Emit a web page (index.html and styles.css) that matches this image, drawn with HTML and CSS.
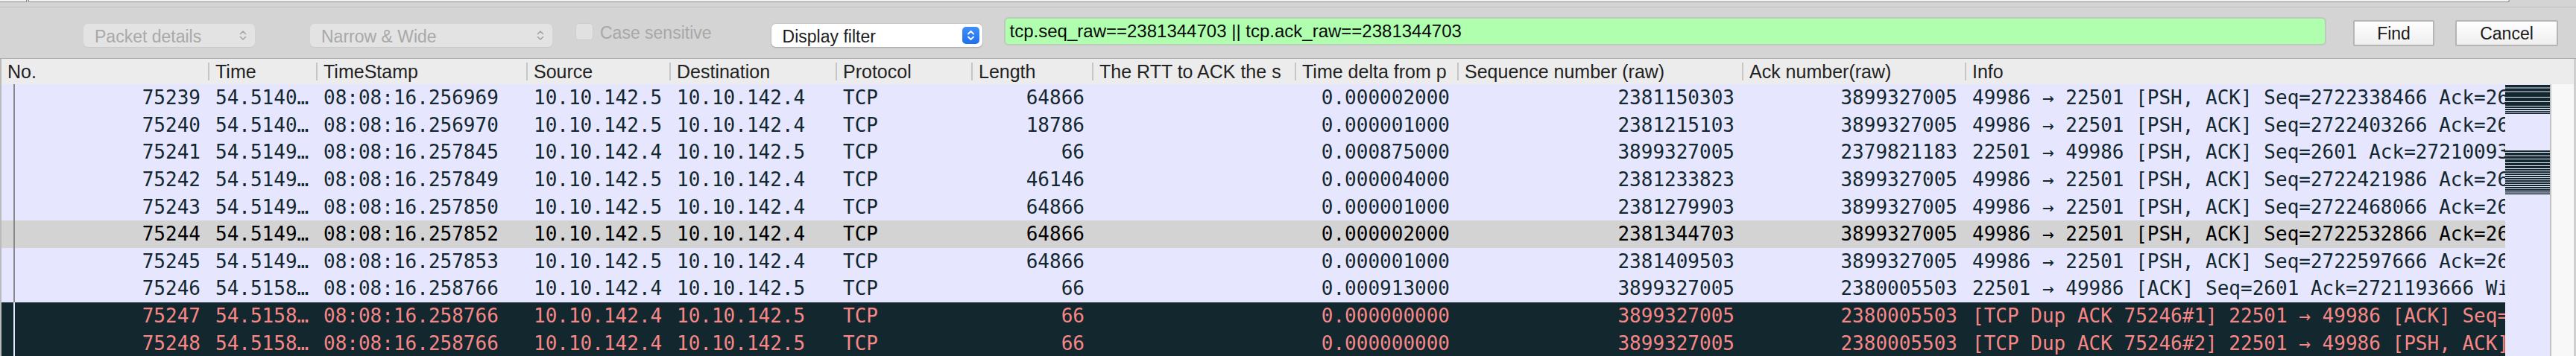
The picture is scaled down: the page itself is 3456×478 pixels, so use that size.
FILE: index.html
```html
<!DOCTYPE html>
<html>
<head>
<meta charset="utf-8">
<link rel="stylesheet" href="styles.css">
</head>
<body>
<div class="topstrip"><div class="ts-a"></div><div class="ts-b"></div></div>
<div class="sep"></div>
<div class="toolbar">
  <div class="popup disabled pd"><span class="lbl">Packet details</span>
    <svg class="chev" width="12" height="17" viewBox="0 0 12 17"><path d="M2.5 6.5 L6 3 L9.5 6.5 M2.5 10.5 L6 14 L9.5 10.5" fill="none" stroke="#a3a3a3" stroke-width="1.6" stroke-linecap="round" stroke-linejoin="round"/></svg>
  </div>
  <div class="popup disabled nw"><span class="lbl">Narrow &amp; Wide</span>
    <svg class="chev" width="12" height="17" viewBox="0 0 12 17"><path d="M2.5 6.5 L6 3 L9.5 6.5 M2.5 10.5 L6 14 L9.5 10.5" fill="none" stroke="#a3a3a3" stroke-width="1.6" stroke-linecap="round" stroke-linejoin="round"/></svg>
  </div>
  <div class="check"></div>
  <div class="checklbl">Case sensitive</div>
  <div class="popup df"><span class="lbl">Display filter</span>
    <span class="stepper"><svg width="23" height="23" viewBox="0 0 23 23"><path d="M8 9.5 L11.5 6 L15 9.5 M8 13.5 L11.5 17 L15 13.5" fill="none" stroke="#ffffff" stroke-width="1.8" stroke-linecap="round" stroke-linejoin="round"/></svg></span>
  </div>
  <div class="filter">tcp.seq_raw==2381344703 || tcp.ack_raw==2381344703</div>
  <div class="btn find">Find</div>
  <div class="btn cancel">Cancel</div>
</div>
<div class="table">
  <div class="hdr">
    <div class="hc first">No.</div>
    <div class="hc">Time</div>
    <div class="hc">TimeStamp</div>
    <div class="hc">Source</div>
    <div class="hc">Destination</div>
    <div class="hc">Protocol</div>
    <div class="hc">Length</div>
    <div class="hc">The RTT to ACK the s</div>
    <div class="hc">Time delta from p</div>
    <div class="hc">Sequence number (raw)</div>
    <div class="hc">Ack number(raw)</div>
    <div class="hc">Info</div>
  </div>
  <div class="body">
    <div class="list">
      <div class="row tcp"><div class="cell no"><span class="rel"></span><span>75239</span></div><div class="cell">54.5140…</div><div class="cell">08:08:16.256969</div><div class="cell">10.10.142.5</div><div class="cell">10.10.142.4</div><div class="cell">TCP</div><div class="cell r">64866</div><div class="cell"></div><div class="cell r">0.000002000</div><div class="cell r">2381150303</div><div class="cell r">3899327005</div><div class="cell">49986 → 22501 [PSH, ACK] Seq=2722338466 Ack=2601 Win=2048 Len=64800</div></div>
      <div class="row tcp"><div class="cell no"><span class="rel"></span><span>75240</span></div><div class="cell">54.5140…</div><div class="cell">08:08:16.256970</div><div class="cell">10.10.142.5</div><div class="cell">10.10.142.4</div><div class="cell">TCP</div><div class="cell r">18786</div><div class="cell"></div><div class="cell r">0.000001000</div><div class="cell r">2381215103</div><div class="cell r">3899327005</div><div class="cell">49986 → 22501 [PSH, ACK] Seq=2722403266 Ack=2601 Win=2048 Len=18720</div></div>
      <div class="row tcp"><div class="cell no"><span class="rel"></span><span>75241</span></div><div class="cell">54.5149…</div><div class="cell">08:08:16.257845</div><div class="cell">10.10.142.4</div><div class="cell">10.10.142.5</div><div class="cell">TCP</div><div class="cell r">66</div><div class="cell"></div><div class="cell r">0.000875000</div><div class="cell r">3899327005</div><div class="cell r">2379821183</div><div class="cell">22501 → 49986 [PSH, ACK] Seq=2601 Ack=2721009366 Win=2048 Len=0</div></div>
      <div class="row tcp"><div class="cell no"><span class="rel"></span><span>75242</span></div><div class="cell">54.5149…</div><div class="cell">08:08:16.257849</div><div class="cell">10.10.142.5</div><div class="cell">10.10.142.4</div><div class="cell">TCP</div><div class="cell r">46146</div><div class="cell"></div><div class="cell r">0.000004000</div><div class="cell r">2381233823</div><div class="cell r">3899327005</div><div class="cell">49986 → 22501 [PSH, ACK] Seq=2722421986 Ack=2601 Win=2048 Len=46080</div></div>
      <div class="row tcp"><div class="cell no"><span class="rel"></span><span>75243</span></div><div class="cell">54.5149…</div><div class="cell">08:08:16.257850</div><div class="cell">10.10.142.5</div><div class="cell">10.10.142.4</div><div class="cell">TCP</div><div class="cell r">64866</div><div class="cell"></div><div class="cell r">0.000001000</div><div class="cell r">2381279903</div><div class="cell r">3899327005</div><div class="cell">49986 → 22501 [PSH, ACK] Seq=2722468066 Ack=2601 Win=2048 Len=64800</div></div>
      <div class="row sel"><div class="cell no"><span class="rel"></span><span>75244</span></div><div class="cell">54.5149…</div><div class="cell">08:08:16.257852</div><div class="cell">10.10.142.5</div><div class="cell">10.10.142.4</div><div class="cell">TCP</div><div class="cell r">64866</div><div class="cell"></div><div class="cell r">0.000002000</div><div class="cell r">2381344703</div><div class="cell r">3899327005</div><div class="cell">49986 → 22501 [PSH, ACK] Seq=2722532866 Ack=2601 Win=2048 Len=64800</div></div>
      <div class="row tcp"><div class="cell no"><span class="rel"></span><span>75245</span></div><div class="cell">54.5149…</div><div class="cell">08:08:16.257853</div><div class="cell">10.10.142.5</div><div class="cell">10.10.142.4</div><div class="cell">TCP</div><div class="cell r">64866</div><div class="cell"></div><div class="cell r">0.000001000</div><div class="cell r">2381409503</div><div class="cell r">3899327005</div><div class="cell">49986 → 22501 [PSH, ACK] Seq=2722597666 Ack=2601 Win=2048 Len=64800</div></div>
      <div class="row tcp"><div class="cell no"><span class="rel"></span><span>75246</span></div><div class="cell">54.5158…</div><div class="cell">08:08:16.258766</div><div class="cell">10.10.142.4</div><div class="cell">10.10.142.5</div><div class="cell">TCP</div><div class="cell r">66</div><div class="cell"></div><div class="cell r">0.000913000</div><div class="cell r">3899327005</div><div class="cell r">2380005503</div><div class="cell">22501 → 49986 [ACK] Seq=2601 Ack=2721193666 Win=2048 Len=0</div></div>
      <div class="row bad"><div class="cell no"><span class="rel"></span><span>75247</span></div><div class="cell">54.5158…</div><div class="cell">08:08:16.258766</div><div class="cell">10.10.142.4</div><div class="cell">10.10.142.5</div><div class="cell">TCP</div><div class="cell r">66</div><div class="cell"></div><div class="cell r">0.000000000</div><div class="cell r">3899327005</div><div class="cell r">2380005503</div><div class="cell">[TCP Dup ACK 75246#1] 22501 → 49986 [ACK] Seq=2601 Ack=2721193666 Win=2048 Len=0</div></div>
      <div class="row bad"><div class="cell no"><span class="rel"></span><span>75248</span></div><div class="cell">54.5158…</div><div class="cell">08:08:16.258766</div><div class="cell">10.10.142.4</div><div class="cell">10.10.142.5</div><div class="cell">TCP</div><div class="cell r">66</div><div class="cell"></div><div class="cell r">0.000000000</div><div class="cell r">3899327005</div><div class="cell r">2380005503</div><div class="cell">[TCP Dup ACK 75246#2] 22501 → 49986 [PSH, ACK] Seq=2601 Ack=2721193666 Win=2048 Len=0</div></div>
    </div>
    <div class="minimap">
      <svg width="60" height="365" viewBox="0 0 60 365">
        <rect x="0" y="1" width="60" height="39" fill="#12272e"/>
        <g fill="#e6e6ff">
          <rect x="0" y="4.5" width="60" height="1"/>
          <rect x="0" y="9.5" width="60" height="1"/>
          <rect x="0" y="17" width="60" height="1"/>
          <rect x="0" y="23" width="60" height="1"/>
          <rect x="0" y="29" width="60" height="1"/>
          <rect x="0" y="32" width="60" height="1"/>
          <rect x="0" y="35" width="60" height="1"/>
          <rect x="0" y="37.5" width="60" height="1"/>
        </g>
        <rect x="0" y="89" width="60" height="59" fill="#12272e"/>
        <g fill="#e6e6ff">
          <rect x="0" y="91" width="60" height="1"/>
          <rect x="0" y="95.5" width="60" height="1"/>
          <rect x="0" y="100" width="60" height="1"/>
          <rect x="0" y="105" width="60" height="1"/>
          <rect x="0" y="109" width="60" height="1"/>
          <rect x="0" y="113" width="60" height="1"/>
          <rect x="0" y="116" width="60" height="1"/>
          <rect x="0" y="119" width="60" height="1"/>
          <rect x="0" y="122" width="60" height="1"/>
          <rect x="0" y="125" width="60" height="1"/>
          <rect x="0" y="128" width="60" height="1"/>
          <rect x="0" y="131" width="60" height="1"/>
          <rect x="0" y="134" width="60" height="1"/>
          <rect x="0" y="137" width="60" height="1"/>
          <rect x="0" y="140" width="60" height="1"/>
          <rect x="0" y="143" width="60" height="1"/>
          <rect x="0" y="145.5" width="60" height="1"/>
        </g>
      </svg>
    </div>
    <div class="vtrack"></div>
  </div>
</div>
</body>
</html>
```

FILE: styles.css
```css
html, body {
  margin: 0;
  padding: 0;
}
body {
  width: 3456px;
  height: 478px;
  overflow: hidden;
  background: #d4d4d4;
  font-family: "Liberation Sans", Arial, sans-serif;
}

/* strip of the widget above */
.topstrip {
  display: flex;
  width: 3367px;
  height: 3px;
}
.ts-a {
  width: 36px;
  box-sizing: border-box;
  background: #f4f4f4;
  border-bottom: 1px solid #8c8c8c;
  border-right: 1px solid #8c8c8c;
}
.ts-b {
  flex: 1;
  margin-left: 2px;
  box-sizing: border-box;
  background: #f4f4f4;
  border: 1px solid #8c8c8c;
  border-top: 0;
  border-bottom-right-radius: 3px;
}
.sep {
  height: 7px;
  box-sizing: border-box;
  border-bottom: 1px solid #c2c2c2;
}

/* find toolbar */
.toolbar {
  display: flex;
  align-items: flex-start;
  height: 69px;
  box-sizing: border-box;
  border-bottom: 1px solid #adadad;
  padding: 0 24px 0 112px;
}
.popup {
  display: flex;
  align-items: center;
  height: 31px;
  margin-top: 22px;
  box-sizing: border-box;
  border-radius: 6px;
  padding: 0 10px 0 15px;
  font-size: 23px;
}
.popup .lbl {
  padding-top: 3px;
  white-space: nowrap;
}
.popup .chev {
  margin-left: auto;
}
.disabled {
  background: #e3e3e3;
  color: #a9a9a9;
  box-shadow: 0 1px 1px rgba(0, 0, 0, 0.06);
}
.pd {
  width: 230px;
}
.nw {
  width: 325px;
  margin-left: 74px;
}
.check {
  width: 24px;
  height: 23px;
  margin-top: 21px;
  margin-left: 31px;
  box-sizing: border-box;
  border-radius: 5px;
  background: #e1e1e1;
  border: 1px solid #cdcdcd;
}
.checklbl {
  margin-left: 9px;
  margin-top: 21px;
  font-size: 23px;
  line-height: 26px;
  color: #a8a8a8;
  white-space: nowrap;
}
.df {
  width: 283px;
  margin-left: 80px;
  background: #ffffff;
  color: #1e1e1e;
  padding-right: 4px;
  box-shadow: 0 0 0 1px rgba(0, 0, 0, 0.06), 0 1px 2px rgba(0, 0, 0, 0.18);
}
.stepper {
  margin-left: auto;
  width: 23px;
  height: 23px;
  border-radius: 5px;
  background: linear-gradient(#3f8ff8, #1f6ff0);
  display: flex;
}
.filter {
  flex: 1;
  margin-left: 29px;
  margin-top: 13px;
  height: 38px;
  box-sizing: border-box;
  border: 2px solid #bcc9bc;
  border-radius: 6px;
  background: #afffaf;
  padding-left: 6px;
  font-size: 24px;
  line-height: 34px;
  color: #0a0a0a;
  white-space: nowrap;
  overflow: hidden;
}
.btn {
  height: 35px;
  margin-top: 17px;
  box-sizing: border-box;
  border: 2px solid #b5b5b5;
  border-radius: 2px;
  background: linear-gradient(#fefefe, #efefef);
  font-size: 23px;
  color: #1a1a1a;
  display: flex;
  align-items: center;
  justify-content: center;
  padding-top: 2px;
}
.find {
  width: 109px;
  margin-left: 36px;
}
.cancel {
  width: 138px;
  margin-left: 28px;
}

/* packet list */
.table {
  height: 399px;
  display: flex;
  flex-direction: column;
  border-left: 2px solid #bababa;
  border-right: 3px solid #cfcfcf;
}
.hdr {
  display: grid;
  grid-template-columns: 277px 145px 282px 192px 223px 182px 162px 272px 218px 382px 299px 1fr;
  height: 34px;
  background: #ececec;
  font-size: 25px;
  line-height: 34px;
  color: #222222;
}
.hc {
  padding: 0 3px 0 10px;
  overflow: hidden;
  white-space: nowrap;
}
.hc.first {
  padding-left: 8px;
}
.hc + .hc {
  background: linear-gradient(#c6c6c6, #c6c6c6) left center / 2px 24px no-repeat;
}
.body {
  flex: 1;
  display: flex;
  min-height: 0;
}
.list {
  width: 3359px;
  overflow: hidden;
}
.row {
  display: grid;
  grid-template-columns: 277px 145px 282px 192px 223px 182px 162px 272px 218px 382px 299px 725px;
  height: 36.625px;
  font-family: "DejaVu Sans Mono", Menlo, monospace;
  font-size: 26px;
  line-height: 37px;
}
.cell {
  padding: 0 10px;
  overflow: hidden;
  white-space: pre;
}
.cell.r {
  text-align: right;
}
.cell.no {
  display: flex;
  justify-content: space-between;
  padding-left: 16px;
}
.rel {
  width: 2px;
  background: #8a8a8a;
}
.tcp {
  background: #e6e6ff;
  color: #12272e;
}
.sel {
  background: #d3d3d3;
  color: #000000;
}
.bad {
  background: #12272e;
  color: #f78787;
}
.bad .rel {
  background: #e6e6ff;
}
.minimap {
  width: 60px;
  background: #e6e6ff;
}
.minimap svg {
  display: block;
}
.vtrack {
  width: 30px;
  border-left: 2px solid #c3c3c3;
  background: #f8f8f8;
}
```
